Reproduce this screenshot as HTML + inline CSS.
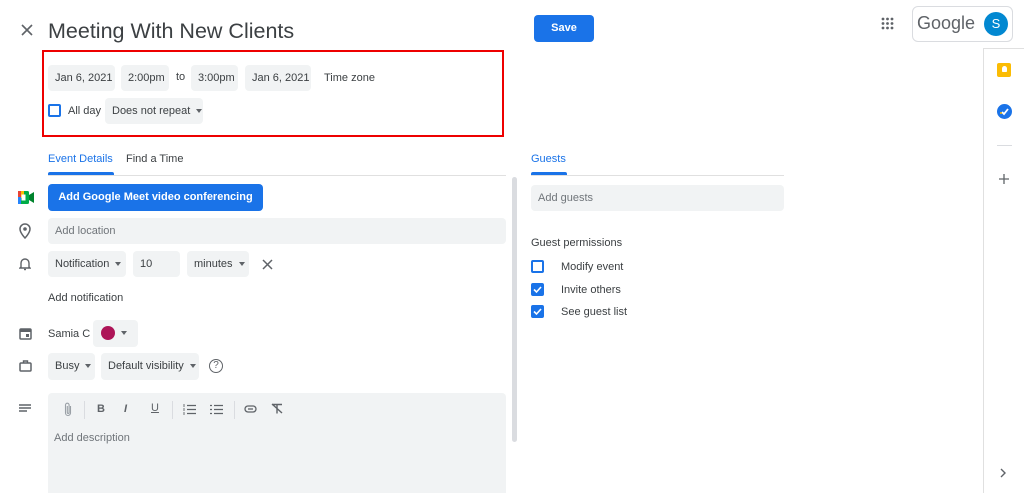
<!DOCTYPE html>
<html><head><meta charset="utf-8"><style>
*{margin:0;padding:0;box-sizing:border-box}
body{width:1024px;height:493px;overflow:hidden;background:#fff;font-family:"Liberation Sans",Arial,sans-serif;color:#3c4043;position:relative;font-size:11px}
.a{position:absolute}
.chip{position:absolute;background:#f1f3f4;border-radius:4px;height:26px;line-height:26px;padding-left:7px;font-size:11px;color:#3c4043;white-space:nowrap;overflow:hidden}
.arr{display:inline-block;width:0;height:0;border-left:3.5px solid transparent;border-right:3.5px solid transparent;border-top:4px solid #5f6368;vertical-align:middle;margin-left:6px}
.cb{position:absolute;width:13px;height:13px;border:2px solid #1a73e8;border-radius:2px}
.cbf{background:#1a73e8}
.t{position:absolute;font-size:11px;white-space:nowrap}
</style></head><body>
<svg class="a" style="left:20px;top:23px" width="14" height="14" viewBox="0 0 14 14"><path d="M2 2L12 12M12 2L2 12" stroke="#5f6368" stroke-width="1.6"/></svg>
<div class="t" style="left:48px;top:19px;font-size:21.5px;color:#3c4043">Meeting With New Clients</div>
<div class="a" style="left:42px;top:50px;width:462px;height:87px;border:2px solid #e00"></div>
<div class="chip" style="left:48px;top:65px;width:67px">Jan 6, 2021</div>
<div class="chip" style="left:121px;top:65px;width:48px">2:00pm</div>
<div class="t" style="left:176px;top:71px">to</div>
<div class="chip" style="left:191px;top:65px;width:47px">3:00pm</div>
<div class="chip" style="left:245px;top:65px;width:66px">Jan 6, 2021</div>
<div class="t" style="left:324px;top:72px">Time zone</div>
<div class="cb" style="left:48px;top:104px"></div>
<div class="t" style="left:68px;top:105px">All day</div>
<div class="chip" style="left:105px;top:98px;width:98px">Does not repeat<span class="arr"></span></div>
<div class="t" style="left:48px;top:153px;color:#1a73e8">Event Details</div>
<div class="t" style="left:126px;top:153px">Find a Time</div>
<div class="a" style="left:48px;top:175px;width:458px;height:1px;background:#e0e0e0"></div>
<div class="a" style="left:48px;top:172px;width:66px;height:3px;background:#1a73e8;border-radius:2px 2px 0 0"></div>
<div class="a" style="left:512px;top:177px;width:5px;height:265px;background:#dadce0;border-radius:3px"></div>
<svg class="a" style="left:18px;top:191px" width="16" height="13" viewBox="0 0 16 13"><rect x="0" y="0" width="11" height="13" rx="1.5" fill="#00ac47"/><rect x="0" y="0" width="6" height="7" fill="#fbbc04"/><rect x="0" y="6" width="3" height="7" fill="#2684fc"/><rect x="0" y="0" width="3" height="6" fill="#ea4335"/><rect x="3.5" y="3.5" width="4" height="6" fill="#fff"/><path d="M11 4L16 1V12L11 9Z" fill="#00832d"/></svg>
<div class="a" style="left:48px;top:184px;width:215px;height:27px;background:#1a73e8;border-radius:4px;color:#fff;font-weight:bold;font-size:11px;line-height:27px;text-align:center;white-space:nowrap">Add Google Meet video conferencing</div>
<svg class="a" style="left:19px;top:223px" width="12" height="16" viewBox="0 0 12 16"><path d="M6 1C3.2 1 1 3.2 1 6c0 3.8 5 9 5 9s5-5.2 5-9c0-2.8-2.2-5-5-5z" fill="none" stroke="#5f6368" stroke-width="1.5"/><circle cx="6" cy="6" r="1.8" fill="#5f6368"/></svg>
<div class="chip" style="left:48px;top:218px;width:458px;color:#70757a">Add location</div>
<svg class="a" style="left:19px;top:257px" width="12" height="14" viewBox="0 0 12 14"><path d="M2 10V6a4 4 0 018 0v4l1 1H1z" fill="none" stroke="#5f6368" stroke-width="1.4"/><path d="M5 12.5h2" stroke="#5f6368" stroke-width="1.4"/></svg>
<div class="chip" style="left:48px;top:251px;width:78px">Notification<span class="arr"></span></div>
<div class="chip" style="left:133px;top:251px;width:47px">10</div>
<div class="chip" style="left:187px;top:251px;width:62px">minutes<span class="arr"></span></div>
<svg class="a" style="left:262px;top:259px" width="11" height="11" viewBox="0 0 11 11"><path d="M1 1L10 10M10 1L1 10" stroke="#5f6368" stroke-width="1.5"/></svg>
<div class="t" style="left:48px;top:292px;font-size:11px">Add notification</div>
<svg class="a" style="left:19px;top:327px" width="13" height="13" viewBox="0 0 13 13"><rect x="1" y="2" width="11" height="10" rx="1" fill="none" stroke="#5f6368" stroke-width="1.5"/><rect x="1" y="2" width="11" height="3" fill="#5f6368"/><rect x="7" y="7" width="3" height="3" fill="#5f6368"/></svg>
<div class="t" style="left:48px;top:328px">Samia C</div>
<div class="chip" style="left:93px;top:320px;width:45px;height:27px;line-height:27px"><span style="display:inline-block;width:14px;height:14px;border-radius:50%;background:#ad1457;vertical-align:middle;margin-left:1px"></span><span class="arr"></span></div>
<svg class="a" style="left:19px;top:360px" width="13" height="12" viewBox="0 0 13 12"><rect x="1" y="3" width="11" height="8" rx="1" fill="none" stroke="#5f6368" stroke-width="1.5"/><path d="M4.5 3V1h4v2" fill="none" stroke="#5f6368" stroke-width="1.4"/></svg>
<div class="chip" style="left:48px;top:353px;width:47px;height:27px;line-height:27px">Busy<span class="arr"></span></div>
<div class="chip" style="left:101px;top:353px;width:98px;height:27px;line-height:27px">Default visibility<span class="arr"></span></div>
<div class="a" style="left:209px;top:359px;width:14px;height:14px;border:1.5px solid #5f6368;border-radius:50%;font-size:10px;line-height:11px;text-align:center;color:#5f6368">?</div>
<svg class="a" style="left:19px;top:404px" width="13" height="9" viewBox="0 0 13 9"><path d="M0 1h12M0 4h12M0 7h8" stroke="#5f6368" stroke-width="1.4"/></svg>
<div class="a" style="left:48px;top:393px;width:458px;height:100px;background:#f1f3f4;border-radius:4px 4px 0 0"></div>
<svg class="a" style="left:64px;top:402px" width="8" height="15" viewBox="0 0 8 15"><path d="M6.5 4v7a2.5 2.5 0 01-5 0V3a1.8 1.8 0 013.6 0v7.5a.9.9 0 01-1.8 0V4" fill="none" stroke="#9aa0a6" stroke-width="1.1"/></svg>
<div class="a" style="left:84px;top:401px;width:1px;height:18px;background:#dadce0"></div>
<div class="t" style="left:97px;top:403px;font-weight:bold;font-size:11px;color:#5f6368">B</div>
<div class="t" style="left:124px;top:403px;font-style:italic;font-weight:bold;font-size:11px;color:#5f6368">I</div>
<div class="t" style="left:151px;top:402px;text-decoration:underline;font-size:11px;color:#5f6368">U</div>
<div class="a" style="left:172px;top:401px;width:1px;height:18px;background:#dadce0"></div>
<svg class="a" style="left:183px;top:404px" width="13" height="11" viewBox="0 0 13 11"><path d="M4 1.5h9M4 5.5h9M4 9.5h9" stroke="#5f6368" stroke-width="1.3"/><path d="M1 0v3M1 4v3M1 8v3" stroke="#5f6368" stroke-width="0.9"/></svg>
<svg class="a" style="left:210px;top:404px" width="13" height="11" viewBox="0 0 13 11"><path d="M4 1.5h9M4 5.5h9M4 9.5h9M0 1.5h2M0 5.5h2M0 9.5h2" stroke="#5f6368" stroke-width="1.3"/></svg>
<div class="a" style="left:234px;top:401px;width:1px;height:18px;background:#dadce0"></div>
<svg class="a" style="left:244px;top:405px" width="13" height="8" viewBox="0 0 13 8"><rect x="1" y="1" width="11" height="6" rx="3" fill="none" stroke="#5f6368" stroke-width="1.3"/><path d="M4 4h5" stroke="#5f6368" stroke-width="1.3"/></svg>
<svg class="a" style="left:271px;top:403px" width="12" height="11" viewBox="0 0 12 11"><path d="M1 1.5h10M6 1.5v9M1 1l10 9" stroke="#5f6368" stroke-width="1.4"/></svg>
<div class="t" style="left:54px;top:432px;color:#70757a">Add description</div>
<div class="a" style="left:534px;top:15px;width:60px;height:27px;background:#1a73e8;border-radius:4px;color:#fff;font-weight:bold;font-size:11px;line-height:27px;text-align:center">Save</div>
<svg class="a" style="left:881px;top:17px" width="13" height="13" viewBox="0 0 13 13" fill="#5f6368"><circle cx="2" cy="2" r="1.4"/><circle cx="6.5" cy="2" r="1.4"/><circle cx="11" cy="2" r="1.4"/><circle cx="2" cy="6.5" r="1.4"/><circle cx="6.5" cy="6.5" r="1.4"/><circle cx="11" cy="6.5" r="1.4"/><circle cx="2" cy="11" r="1.4"/><circle cx="6.5" cy="11" r="1.4"/><circle cx="11" cy="11" r="1.4"/></svg>
<div class="a" style="left:912px;top:6px;width:101px;height:36px;border:1px solid #dadce0;border-radius:6px"></div>
<div class="t" style="left:917px;top:13px;font-size:18px;color:#5f6368">Google</div>
<div class="a" style="left:984px;top:12px;width:24px;height:24px;border-radius:50%;background:#0288d1;color:#fff;font-size:13px;line-height:24px;text-align:center">S</div>
<div class="a" style="left:983px;top:48px;width:41px;height:445px;border-left:1px solid #e0e0e0;border-top:1px solid #e0e0e0"></div>
<div class="a" style="left:997px;top:63px;width:14px;height:14px;background:#fbbc04;border-radius:2px"></div>
<div class="a" style="left:1001.5px;top:66px;width:5px;height:6px;background:#fff;border-radius:3px 3px 1px 1px"></div>
<div class="a" style="left:997px;top:104px;width:15px;height:15px;background:#1a73e8;border-radius:50%"></div>
<svg class="a" style="left:997px;top:104px" width="15" height="15" viewBox="0 0 15 15"><path d="M5 8l2 2 4-5" stroke="#fff" stroke-width="1.8" fill="none"/><circle cx="4" cy="9" r="1" fill="#fbbc04"/></svg>
<div class="a" style="left:997px;top:145px;width:15px;height:1px;background:#dadce0"></div>
<svg class="a" style="left:999px;top:174px" width="10" height="10" viewBox="0 0 10 10"><path d="M5 0v10M0 5h10" stroke="#5f6368" stroke-width="1.3"/></svg>
<svg class="a" style="left:1000px;top:468px" width="6" height="10" viewBox="0 0 6 10"><path d="M1 1l4 4-4 4" stroke="#5f6368" stroke-width="1.4" fill="none"/></svg>
<div class="t" style="left:531px;top:153px;color:#1a73e8">Guests</div>
<div class="a" style="left:531px;top:175px;width:253px;height:1px;background:#e0e0e0"></div>
<div class="a" style="left:531px;top:172px;width:36px;height:3px;background:#1a73e8;border-radius:2px 2px 0 0"></div>
<div class="chip" style="left:531px;top:185px;width:253px;color:#70757a">Add guests</div>
<div class="t" style="left:531px;top:237px">Guest permissions</div>
<div class="cb" style="left:531px;top:260px"></div>
<div class="t" style="left:561px;top:261px">Modify event</div>
<div class="cb cbf" style="left:531px;top:283px"></div>
<svg class="a" style="left:531px;top:283px" width="13" height="13" viewBox="0 0 13 13"><path d="M3 6.5l2.5 2.5 4.5-5" stroke="#fff" stroke-width="1.6" fill="none"/></svg>
<div class="t" style="left:561px;top:284px">Invite others</div>
<div class="cb cbf" style="left:531px;top:305px"></div>
<svg class="a" style="left:531px;top:305px" width="13" height="13" viewBox="0 0 13 13"><path d="M3 6.5l2.5 2.5 4.5-5" stroke="#fff" stroke-width="1.6" fill="none"/></svg>
<div class="t" style="left:561px;top:306px">See guest list</div>
</body></html>
